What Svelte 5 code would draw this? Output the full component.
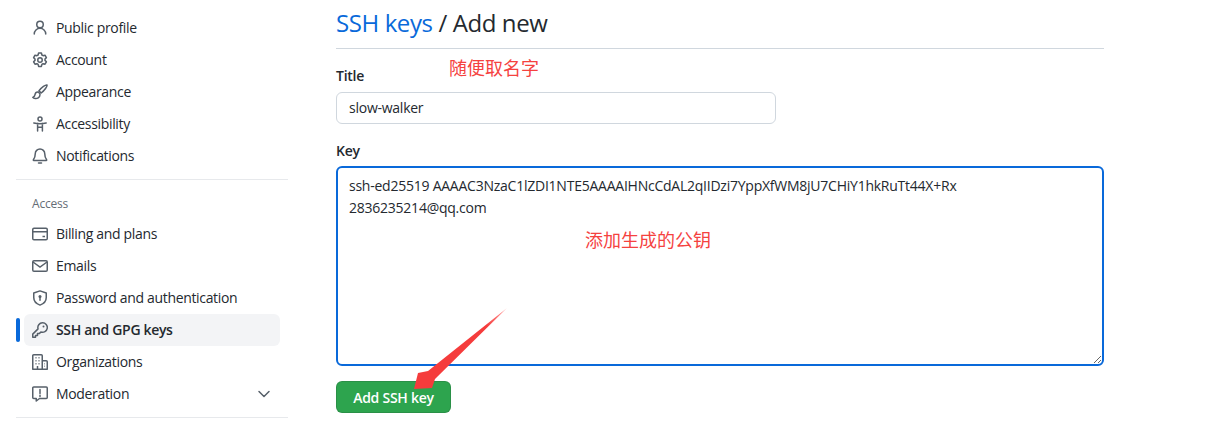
<script lang="ts">
  const groupOne = [
    { label: 'Public profile', icon: 'person' },
    { label: 'Account', icon: 'gear' },
    { label: 'Appearance', icon: 'brush' },
    { label: 'Accessibility', icon: 'access' },
    { label: 'Notifications', icon: 'bell' }
  ];

  const groupTwo = [
    { label: 'Billing and plans', icon: 'card' },
    { label: 'Emails', icon: 'mail' },
    { label: 'Password and authentication', icon: 'shield' },
    { label: 'SSH and GPG keys', icon: 'key', active: true },
    { label: 'Organizations', icon: 'org' },
    { label: 'Moderation', icon: 'report', chevron: true }
  ];

  const keyText =
    'ssh-ed25519 AAAAC3NzaC1lZDI1NTE5AAAAIHNcCdAL2qIIDzi7YppXfWM8jU7CHiY1hkRuTt44X+Rx\n2836235214@qq.com';
</script>

{#snippet icon(name)}
  <svg class="icon" viewBox="0 0 16 16" aria-hidden="true">
    {#if name === 'person'}
      <circle cx="8" cy="4.5" r="3.25" />
      <path d="M2.25 14a5.75 5.75 0 0 1 11.5 0" stroke-linecap="round" />
    {:else if name === 'gear'}
      <path d="M6.6 1h2.8l.5 2 1.2.7 1.9-.5 1.4 2.4-1.4 1.4v1.4l1.4 1.4-1.4 2.4-1.9-.5-1.2.7-.5 2H6.6l-.5-2-1.2-.7-1.9.5-1.4-2.4 1.4-1.4V7L1.6 5.6 3 3.2l1.9.5 1.2-.7z" stroke-linejoin="round" />
      <circle cx="8" cy="8" r="2.25" />
    {:else if name === 'brush'}
      <path d="M15 1c-1.2-.6-5.6 2.6-8 5.8l2.2 2.2C12.4 6.6 15.6 2.2 15 1z" stroke-linejoin="round" />
      <path d="M6.4 8c-1.9-.2-3.2 1-3.4 2.7-.1 1-.6 2-2.2 2.7.9 1.2 3.6 1.7 5.4.5 1.3-.9 2-2.4 1.7-4.1z" stroke-linejoin="round" />
    {:else if name === 'access'}
      <circle cx="8" cy="3" r="2" />
      <path d="M1.8 7c4.2 1 8.2 1 12.4 0M5.6 7.4v7.6M10.4 7.4v7.6M5.6 11.2h4.8" stroke-linecap="round" />
    {:else if name === 'bell'}
      <path d="M8 1a4.75 4.75 0 0 0-4.75 4.75c0 3-.8 4.8-1.9 6.1-.2.3 0 .65.3.65h12.7c.3 0 .5-.35.3-.65-1.1-1.3-1.9-3.1-1.9-6.1A4.75 4.75 0 0 0 8 1z" stroke-linejoin="round" />
      <path d="M6.5 14.9h3" stroke-linecap="round" />
    {:else if name === 'card'}
      <rect x="0.75" y="2.25" width="14.5" height="11.5" rx="1.25" />
      <path d="M1 5.75h14M10.5 10.5h2.5" />
    {:else if name === 'mail'}
      <rect x="0.75" y="2.75" width="14.5" height="10.5" rx="1.25" />
      <path d="M1 4l7 5 7-5" />
    {:else if name === 'shield'}
      <path d="M8 .9l6.25 2.1v4.5c0 3.6-2.4 6.2-6.25 7.6-3.85-1.4-6.25-4-6.25-7.6V3z" stroke-linejoin="round" />
      <circle class="fill" cx="8" cy="6.5" r="1.5" />
      <path d="M8 7v3.2" stroke-linecap="round" />
    {:else if name === 'key'}
      <path d="M10.5.75a4.75 4.75 0 1 1-1.6 9.2L7.25 11.6H5.5v2H3.5v1.65H.75v-3.1l5.3-5.3A4.75 4.75 0 0 1 10.5.75z" stroke-linejoin="round" />
      <circle class="fill" cx="11.5" cy="4.5" r="1" />
    {:else if name === 'org'}
      <path d="M.75 15.25V1.75a1 1 0 0 1 1-1h7.5a1 1 0 0 1 1 1v13.5zM10.25 6.75h4a1 1 0 0 1 1 1v7.5h-5M5.5 15v-3" stroke-linejoin="round" />
      <path d="M3.5 3.75h1M6.5 3.75h1M3.5 6.75h1M6.5 6.75h1M3.5 9.75h1M6.5 9.75h1M12.5 9.75h.5M12.5 12.25h.5" />
    {:else if name === 'report'}
      <path d="M1.75 1h12.5a1 1 0 0 1 1 1v9.5a1 1 0 0 1-1 1H7.5L4.25 15v-2.5h-2.5a1 1 0 0 1-1-1V2a1 1 0 0 1 1-1z" stroke-linejoin="round" />
      <path d="M8 3.5v4M8 9.3v1.2" stroke-linecap="round" />
    {/if}
  </svg>
{/snippet}

{#snippet navItem(item)}
  <li class="nav-item" class:active={item.active}>
    {@render icon(item.icon)}
    <span class="nav-label">{item.label}</span>
    {#if item.chevron}
      <svg class="chevron" viewBox="0 0 16 16" aria-hidden="true">
        <path d="M3 5.5l5 5 5-5" />
      </svg>
    {/if}
  </li>
{/snippet}

<div class="page">
  <aside class="sidebar">
    <ul class="nav-list">
      {#each groupOne as item}
        {@render navItem(item)}
      {/each}
    </ul>
    <div class="nav-rule first"></div>
    <h3 class="nav-heading">Access</h3>
    <ul class="nav-list">
      {#each groupTwo as item}
        {@render navItem(item)}
      {/each}
    </ul>
    <div class="nav-rule"></div>
  </aside>

  <main class="content">
    <h2 class="page-title"><a href="#keys">SSH keys</a> / Add new</h2>

    <label class="field-label title-label" for="title">Title</label>
    <input id="title" class="title-input" type="text" value="slow-walker" />

    <label class="field-label key-label" for="key">Key</label>
    <textarea id="key" class="key-input" value={keyText}></textarea>

    <button class="submit" type="button">Add SSH key</button>
  </main>

  <span class="note note-title">随便取名字</span>
  <span class="note note-key">添加生成的公钥</span>
  <svg class="arrow" viewBox="0 0 120 100" aria-hidden="true">
    <defs>
      <linearGradient id="fade" x1="1" y1="0" x2="0" y2="1">
        <stop offset="0" stop-color="#fcc" />
        <stop offset="0.06" stop-color="#f88" />
        <stop offset="0.22" stop-color="#f53c3c" />
      </linearGradient>
    </defs>
    <polygon points="107,8 28,71 18,73 14,89 32,88 35,79" fill="url(#fade)" />
  </svg>
</div>

<style>
  :global(body) {
    margin: 0;
    background: #fff;
  }

  .page {
    position: relative;
    display: flex;
    width: 1206px;
    height: 423px;
    overflow: hidden;
    font-family: 'Open Sans', 'Noto Sans CJK SC', sans-serif;
    font-size: 14px;
    color: #24292f;
  }

  .sidebar {
    width: 272px;
    margin-left: 16px;
    padding-top: 12px;
    flex: none;
  }

  .nav-list {
    list-style: none;
    margin: 0;
    padding: 0 8px;
  }

  .nav-item {
    position: relative;
    display: flex;
    align-items: center;
    height: 32px;
    padding-left: 8px;
    border-radius: 6px;
    letter-spacing: -0.33px;
  }

  .nav-label {
    margin-top: -2px;
  }

  .nav-item.active {
    background: #f3f4f6;
    font-weight: 600;
  }

  .nav-item.active::before {
    content: '';
    position: absolute;
    left: -8px;
    top: 4px;
    width: 4px;
    height: 24px;
    border-radius: 6px;
    background: #0969da;
  }

  .icon {
    width: 16px;
    height: 16px;
    margin-right: 8px;
    flex: none;
    fill: none;
    stroke: #57606a;
    stroke-width: 1.5;
  }

  .icon .fill {
    fill: #57606a;
    stroke: none;
  }

  .chevron {
    width: 16px;
    height: 16px;
    margin-left: auto;
    margin-right: 8px;
    fill: none;
    stroke: #57606a;
    stroke-width: 1.5;
    stroke-linecap: round;
    stroke-linejoin: round;
  }

  .nav-rule {
    height: 1px;
    margin-top: 7px;
    background: #e7e9ec;
  }

  .nav-heading {
    margin: 16px 0 6px 16px;
    font-size: 12px;
    line-height: 16px;
    font-weight: 400;
    color: #656d76;
    letter-spacing: -0.2px;
  }

  .content {
    width: 768px;
    margin-left: 48px;
    flex: none;
    display: flex;
    flex-direction: column;
    align-items: flex-start;
  }

  .page-title {
    width: 100%;
    height: 48px;
    margin: 0;
    border-bottom: 1px solid #d0d7de;
    font-size: 24px;
    line-height: 46px;
    font-weight: 400;
    letter-spacing: -0.4px;
  }

  .page-title a {
    color: #0969da;
    text-decoration: none;
  }

  .field-label {
    font-weight: 600;
    line-height: 20px;
    letter-spacing: -0.25px;
  }

  .title-label {
    margin-top: 17px;
  }

  .key-label {
    margin-top: 17px;
  }

  .title-input {
    box-sizing: border-box;
    width: 440px;
    height: 32px;
    margin-top: 6px;
    padding: 0 12px 2px;
    border: 1px solid #d0d7de;
    border-radius: 6px;
    outline: none;
    font: inherit;
    color: inherit;
    letter-spacing: -0.25px;
  }

  .key-input {
    box-sizing: border-box;
    display: block;
    width: 768px;
    height: 200px;
    margin-top: 5px;
    padding: 7px 11px;
    border: 2px solid #0969da;
    border-radius: 6px;
    outline: none;
    font: inherit;
    line-height: 22px;
    color: inherit;
    letter-spacing: -0.24px;
  }

  .submit {
    box-sizing: border-box;
    width: 115px;
    height: 32px;
    margin-top: 15px;
    padding: 0;
    border: 1px solid rgba(27, 31, 36, 0.15);
    border-radius: 6px;
    background: #2da44e;
    color: #fff;
    font: inherit;
    font-weight: 600;
    letter-spacing: -0.25px;
  }

  .note {
    position: absolute;
    font-size: 18px;
    line-height: 24px;
    color: #f5423f;
    white-space: nowrap;
  }

  .note-title {
    left: 449px;
    top: 56px;
  }

  .note-key {
    left: 585px;
    top: 228px;
  }

  .arrow {
    position: absolute;
    left: 400px;
    top: 300px;
    width: 120px;
    height: 100px;
  }
</style>
